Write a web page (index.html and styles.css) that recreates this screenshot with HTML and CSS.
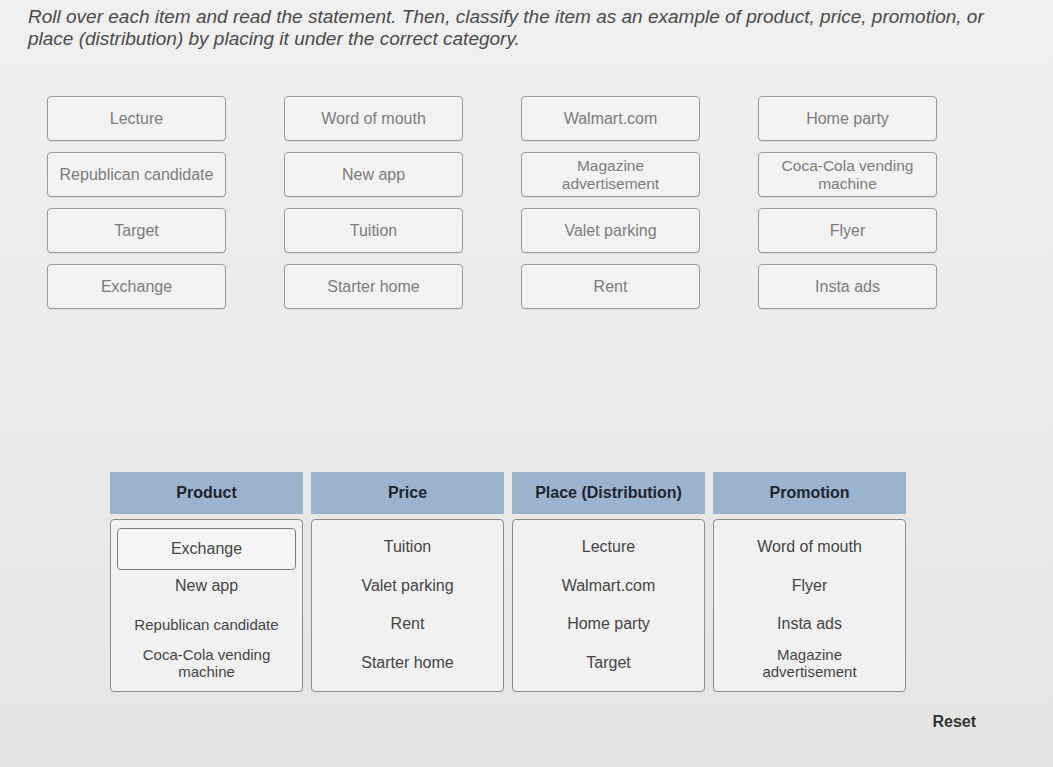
FILE: index.html
```html
<!DOCTYPE html>
<html>
<head>
<meta charset="utf-8">
<link rel="stylesheet" href="styles.css">
</head>
<body>
<div class="page">
  <p class="instructions">Roll over each item and read the statement. Then, classify the item as an example of product, price, promotion, or place (distribution) by placing it under the correct category.</p>

  <div class="items">
    <div class="item">Lecture</div>
    <div class="item">Word of mouth</div>
    <div class="item">Walmart.com</div>
    <div class="item">Home party</div>

    <div class="item">Republican candidate</div>
    <div class="item">New app</div>
    <div class="item two">Magazine<br>advertisement</div>
    <div class="item two">Coca-Cola vending<br>machine</div>

    <div class="item">Target</div>
    <div class="item">Tuition</div>
    <div class="item">Valet parking</div>
    <div class="item">Flyer</div>

    <div class="item">Exchange</div>
    <div class="item">Starter home</div>
    <div class="item">Rent</div>
    <div class="item">Insta ads</div>
  </div>

  <div class="categories">
    <div class="category">
      <div class="cat-head">Product</div>
      <div class="cat-body">
        <div class="slot"><div class="slot-card">Exchange</div></div>
        <div class="slot">New app</div>
        <div class="slot small">Republican candidate</div>
        <div class="slot small two">Coca-Cola vending<br>machine</div>
      </div>
    </div>
    <div class="category">
      <div class="cat-head">Price</div>
      <div class="cat-body">
        <div class="slot">Tuition</div>
        <div class="slot">Valet parking</div>
        <div class="slot">Rent</div>
        <div class="slot">Starter home</div>
      </div>
    </div>
    <div class="category">
      <div class="cat-head">Place (Distribution)</div>
      <div class="cat-body">
        <div class="slot">Lecture</div>
        <div class="slot">Walmart.com</div>
        <div class="slot">Home party</div>
        <div class="slot">Target</div>
      </div>
    </div>
    <div class="category">
      <div class="cat-head">Promotion</div>
      <div class="cat-body">
        <div class="slot">Word of mouth</div>
        <div class="slot">Flyer</div>
        <div class="slot">Insta ads</div>
        <div class="slot small two">Magazine<br>advertisement</div>
      </div>
    </div>
  </div>

  <div class="footer">
    <span class="reset">Reset</span>
  </div>
</div>
</body>
</html>
```

FILE: styles.css
```css
html, body {
  margin: 0;
  padding: 0;
}

body {
  background: linear-gradient(180deg, #f0f0f0 0%, #ebebeb 50%, #e4e4e2 100%);
  font-family: "Liberation Sans", Arial, sans-serif;
  width: 1053px;
  height: 767px;
  overflow: hidden;
}

.page {
  padding: 6px 0 0 28px;
}

.instructions {
  margin: 0;
  width: 1000px;
  font-style: italic;
  font-size: 19px;
  line-height: 22px;
  color: #4a4a4a;
}

.items {
  display: grid;
  grid-template-columns: repeat(4, 179px);
  grid-auto-rows: 45px;
  column-gap: 58px;
  row-gap: 11px;
  margin: 46px 0 0 19px;
}

.item {
  display: flex;
  align-items: center;
  justify-content: center;
  text-align: center;
  background: #f3f3f3;
  border: 1px solid #9a9a9a;
  border-radius: 4px;
  box-shadow: 0 1px 1px rgba(0, 0, 0, 0.08);
  color: #7c7c7c;
  font-size: 16px;
  line-height: 19px;
}

.item.two {
  font-size: 15.5px;
  line-height: 18px;
}

.categories {
  display: grid;
  grid-template-columns: repeat(4, 193px);
  column-gap: 8px;
  margin: 163px 0 0 82px;
}

.category {
  display: flex;
  flex-direction: column;
  gap: 5px;
}

.cat-head {
  height: 42px;
  display: flex;
  align-items: center;
  justify-content: center;
  background: #9cb3ce;
  color: #1f2530;
  font-weight: bold;
  font-size: 16px;
}

.cat-body {
  height: 173px;
  box-sizing: border-box;
  padding: 8px 6px 9px;
  border: 1px solid #8c8c8c;
  border-radius: 4px;
  background: #f1f1f1;
  display: flex;
  flex-direction: column;
}

.slot {
  height: 39px;
  display: flex;
  align-items: center;
  justify-content: center;
  text-align: center;
  color: #454545;
  font-size: 16px;
  line-height: 18px;
}

.slot.small {
  font-size: 15px;
  line-height: 17px;
}

.slot-card {
  width: 100%;
  height: 42px;
  box-sizing: border-box;
  display: flex;
  align-items: center;
  justify-content: center;
  border: 1px solid #7f7f7f;
  border-radius: 4px;
  background: #f5f5f5;
  margin-top: 2px;
}

.footer {
  display: flex;
  justify-content: flex-end;
  width: 948px;
  margin-top: 21px;
}

.reset {
  font-weight: bold;
  font-size: 16px;
  color: #333;
}
```
